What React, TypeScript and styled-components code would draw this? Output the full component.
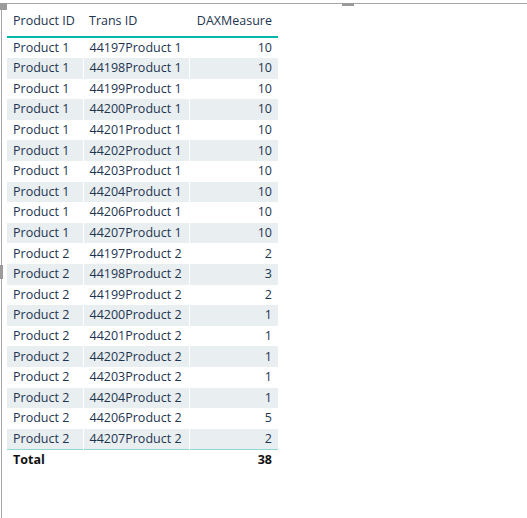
import React from "react";
import styled, { createGlobalStyle } from "styled-components";

const Global = createGlobalStyle`
  html, body { margin: 0; padding: 0; background: #ffffff; }
  body { font-family: "Open Sans", "Noto Sans", sans-serif; }
`;

const Page = styled.div`
  width: 527px;
  height: 518px;
  padding-top: 3px;
  box-sizing: border-box;
  overflow: hidden;
`;

const Frame = styled.div`
  position: relative;
  margin-left: 1px;
  height: 515px;
  border-top: 1px solid #a6a6a6;
  border-left: 1px solid #a6a6a6;
  box-sizing: border-box;
  padding-left: 5px;
`;

const Handle = styled.div<{ $w: number; $h: number; $top: number; $left: number }>`
  position: absolute;
  top: ${(p) => p.$top}px;
  left: ${(p) => p.$left}px;
  width: ${(p) => p.$w}px;
  height: ${(p) => p.$h}px;
  background: #9b9b9b;
`;

const Table = styled.table`
  border-collapse: collapse;
  table-layout: fixed;
  width: 271px;
  font-size: 12.5px;
  color: #1d3550;
`;

const Col = styled.col<{ $w: number }>`
  width: ${(p) => p.$w}px;
`;

const HeadCell = styled.th<{ $right?: boolean }>`
  height: 32px;
  padding: 0 6px;
  font-weight: 400;
  text-align: ${(p) => (p.$right ? "right" : "left")};
  white-space: nowrap;
  border-bottom: 2px solid #01b8aa;
  vertical-align: middle;
`;

const Row = styled.tr<{ $band: boolean }>`
  height: 20.6px;
  background: ${(p) => (p.$band ? "#e9eef1" : "transparent")};
`;

const Cell = styled.td<{ $right?: boolean }>`
  padding: 0 6px;
  text-align: ${(p) => (p.$right ? "right" : "left")};
  white-space: nowrap;
  line-height: 20px;
  & + & {
    border-left: 1px solid #ffffff;
  }
`;

const TotalRow = styled.tr`
  height: 21px;
  border-top: 1px solid #8fd6d0;
`;

const TotalCell = styled.td<{ $right?: boolean }>`
  padding: 0 6px;
  font-weight: 700;
  color: #111;
  line-height: 18px;
  text-align: ${(p) => (p.$right ? "right" : "left")};
`;

const data: [string, string, number][] = [
  ["Product 1", "44197Product 1", 10],
  ["Product 1", "44198Product 1", 10],
  ["Product 1", "44199Product 1", 10],
  ["Product 1", "44200Product 1", 10],
  ["Product 1", "44201Product 1", 10],
  ["Product 1", "44202Product 1", 10],
  ["Product 1", "44203Product 1", 10],
  ["Product 1", "44204Product 1", 10],
  ["Product 1", "44206Product 1", 10],
  ["Product 1", "44207Product 1", 10],
  ["Product 2", "44197Product 2", 2],
  ["Product 2", "44198Product 2", 3],
  ["Product 2", "44199Product 2", 2],
  ["Product 2", "44200Product 2", 1],
  ["Product 2", "44201Product 2", 1],
  ["Product 2", "44202Product 2", 1],
  ["Product 2", "44203Product 2", 1],
  ["Product 2", "44204Product 2", 1],
  ["Product 2", "44206Product 2", 5],
  ["Product 2", "44207Product 2", 2],
];

export default function App() {
  return (
    <Page>
      <Global />
      <Frame>
        <Handle $top={-1} $left={-2} $w={7} $h={7} />
        <Handle $top={-1} $left={340} $w={12} $h={3} />
        <Handle $top={261} $left={-2} $w={3} $h={14} />
        <Table>
          <colgroup>
            <Col $w={76} />
            <Col $w={106} />
            <Col $w={89} />
          </colgroup>
          <thead>
            <tr>
              <HeadCell>Product ID</HeadCell>
              <HeadCell>Trans ID</HeadCell>
              <HeadCell $right>DAXMeasure</HeadCell>
            </tr>
          </thead>
          <tbody>
            {data.map(([p, t, v], i) => (
              <Row key={t} $band={i % 2 === 1}>
                <Cell>{p}</Cell>
                <Cell>{t}</Cell>
                <Cell $right>{v}</Cell>
              </Row>
            ))}
            <TotalRow>
              <TotalCell>Total</TotalCell>
              <TotalCell />
              <TotalCell $right>38</TotalCell>
            </TotalRow>
          </tbody>
        </Table>
      </Frame>
    </Page>
  );
}
